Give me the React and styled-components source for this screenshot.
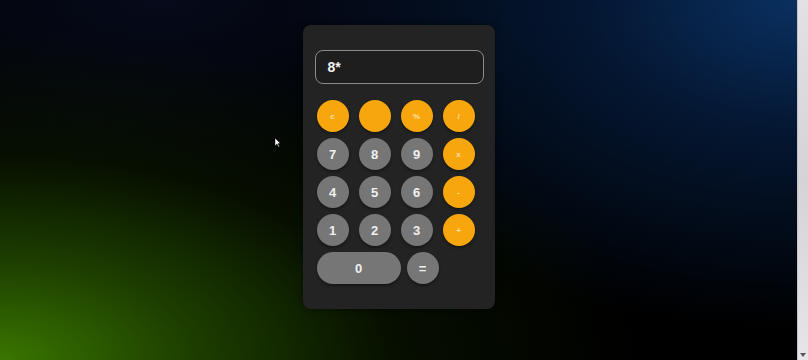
import React from 'react';
import styled, { createGlobalStyle } from 'styled-components';

const GlobalStyle = createGlobalStyle`
  html, body {
    margin: 0;
    padding: 0;
    width: 808px;
    height: 360px;
    overflow: hidden;
    font-family: "Liberation Sans", Arial, sans-serif;
  }
`;

const Screen = styled.div`
  display: flex;
  width: 808px;
  height: 360px;
`;

const Stage = styled.div`
  position: relative;
  flex: 1;
  display: flex;
  justify-content: center;
  align-items: flex-start;
  padding-top: 25px;
  background:
    radial-gradient(ellipse 640px 330px at 0% 100%, rgba(58, 118, 0, 1) 0%, rgba(36, 78, 0, 0.8) 30%, rgba(14, 32, 0, 0.45) 62%, rgba(0, 0, 0, 0) 100%),
    radial-gradient(ellipse 520px 330px at 100% 0%, rgba(10, 48, 96, 1) 0%, rgba(6, 30, 66, 0.75) 40%, rgba(0, 0, 0, 0) 100%),
    radial-gradient(ellipse 420px 180px at 20% 0%, rgba(6, 10, 26, 1) 0%, rgba(0, 0, 0, 0) 100%),
    #000;
`;

const Scrollbar = styled.div`
  width: 10px;
  background: linear-gradient(to bottom, #e2e2e6 0%, #d4d4d8 50%, #e6e6ea 100%);
  border-left: 1px solid #c4c4c8;
  display: flex;
  flex-direction: column;
  justify-content: flex-end;
  align-items: center;
  padding-bottom: 3px;
`;

const ScrollArrow = styled.div`
  width: 0;
  height: 0;
  border-left: 3px solid transparent;
  border-right: 3px solid transparent;
  border-top: 4px solid #555;
`;

const Cursor = styled.svg`
  position: absolute;
  left: 274px;
  top: 138px;
`;

const Panel = styled.div`
  width: 192px;
  box-sizing: border-box;
  padding: 25px 14px 25px 14px;
  background: #232323;
  border-radius: 8px;
  box-shadow: 0 0 6px rgba(0, 0, 0, 0.5);
`;

const Display = styled.div`
  height: 34px;
  box-sizing: border-box;
  margin: 0 -3px 16px -2px;
  border: 1px solid #8c8c8c;
  border-radius: 8px;
  background: #1e1e1e;
  display: flex;
  align-items: center;
  padding-left: 12px;
  color: #f2f2f2;
  font-weight: bold;
  font-size: 14px;
`;

const Row = styled.div`
  display: flex;
  gap: ${(p) => p.$gap || 10}px;
  margin-bottom: 6px;

  &:last-child {
    margin-bottom: 0;
  }
`;

const Key = styled.div`
  width: ${(p) => p.$w || 32}px;
  height: 32px;
  border-radius: 16px;
  display: flex;
  align-items: center;
  justify-content: center;
  background: ${(p) => (p.$op ? '#f7a70d' : '#767676')};
  color: ${(p) => (p.$op ? 'rgba(255, 236, 200, 0.85)' : '#f0f0f0')};
  font-weight: bold;
  font-size: ${(p) => (p.$op ? 8 : 13)}px;
  box-shadow: 0 2px 3px rgba(0, 0, 0, 0.35);
`;

const rows = [
  [['c', 1], ['', 1], ['%', 1], ['/', 1]],
  [['7'], ['8'], ['9'], ['x', 1]],
  [['4'], ['5'], ['6'], ['-', 1]],
  [['1'], ['2'], ['3'], ['+', 1]],
];

export default function App() {
  return (
    <>
      <GlobalStyle />
      <Screen>
        <Stage>
          <Panel>
            <Display>8*</Display>
            {rows.map((r, i) => (
              <Row key={i}>
                {r.map(([label, op], j) => (
                  <Key key={j} $op={op}>{label}</Key>
                ))}
              </Row>
            ))}
            <Row $gap={6}>
              <Key $w={84}>0</Key>
              <Key>=</Key>
            </Row>
          </Panel>
          <Cursor width="7" height="10" viewBox="0 0 7 10">
            <path d="M1 0 L1 8 L3 6 L4.5 9 L5.5 8.5 L4 5.5 L6.5 5.5 Z" fill="#fff" stroke="#000" strokeWidth="0.5" />
          </Cursor>
        </Stage>
        <Scrollbar>
          <ScrollArrow />
        </Scrollbar>
      </Screen>
    </>
  );
}
